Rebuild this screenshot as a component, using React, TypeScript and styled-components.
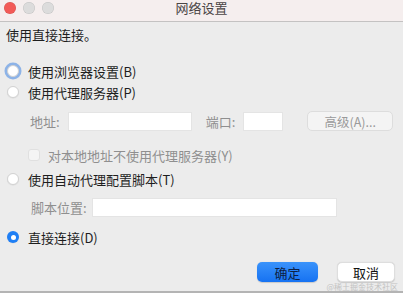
import React from "react";
import styled, { createGlobalStyle } from "styled-components";

const GlobalStyle = createGlobalStyle`
  html, body {
    margin: 0;
    padding: 0;
    background: #ececec;
    font-family: "Noto Sans CJK SC", "Liberation Sans", sans-serif;
  }
`;

const Window = styled.div`
  width: 403px;
  height: 293px;
  background: #ececec;
  display: flex;
  flex-direction: column;
  box-sizing: border-box;
  border-bottom: 2px solid #b4b4b4;
  position: relative;
  overflow: hidden;
`;

const TitleBar = styled.div`
  height: 21px;
  flex-shrink: 0;
  background: #f5eeee;
  border-bottom: 1px solid #c4c2c2;
  display: flex;
  align-items: center;
  position: relative;
`;

const Lights = styled.div`
  display: flex;
  gap: 7px;
  padding-left: 4px;
  margin-top: -6px;
`;

const Light = styled.span<{ color: string }>`
  width: 12px;
  height: 12px;
  border-radius: 50%;
  background: ${(p) => p.color};
  box-shadow: inset 0 0 0 0.5px rgba(0, 0, 0, 0.12);
`;

const Title = styled.div`
  position: absolute;
  left: 0;
  right: 0;
  top: 0;
  line-height: 15px;
  text-align: center;
  font-size: 13px;
  color: #4a4545;
`;

const Body = styled.div`
  display: flex;
  flex-direction: column;
  padding-left: 6px;
`;

const Row = styled.div<{ top: number; indent?: number }>`
  height: 20px;
  margin-top: ${(p) => p.top}px;
  padding-left: ${(p) => p.indent || 0}px;
  display: flex;
  align-items: center;
  font-size: 13px;
  color: #1e1e1e;
  white-space: nowrap;
`;

const Radio = styled.span<{ checked?: boolean; focus?: boolean }>`
  width: 12px;
  height: 12px;
  border-radius: 50%;
  box-sizing: border-box;
  margin-right: 9px;
  flex-shrink: 0;
  position: relative;
  background: ${(p) => (p.checked ? "#1f7ff5" : "#ffffff")};
  border: ${(p) => (p.checked ? "none" : "1px solid #d2d2d2")};
  box-shadow: ${(p) =>
    p.focus ? "0 0 0 2.5px rgba(110, 160, 230, 0.75)" : "0 0.5px 1px rgba(0,0,0,0.08)"};
  &::after {
    content: "";
    display: ${(p) => (p.checked ? "block" : "none")};
    position: absolute;
    left: 3.5px;
    top: 3.5px;
    width: 5px;
    height: 5px;
    border-radius: 50%;
    background: #fff;
  }
`;

const Check = styled.span`
  width: 12px;
  height: 12px;
  border-radius: 3px;
  box-sizing: border-box;
  border: 1px solid #e0e0e0;
  background: #f4f4f4;
  margin-right: 8px;
  flex-shrink: 0;
`;

const Muted = styled.span<{ gap?: number; lead?: number }>`
  color: #8f8f8f;
  margin-left: ${(p) => p.lead || 0}px;
  margin-right: ${(p) => p.gap || 0}px;
`;

const Input = styled.span<{ w: number }>`
  width: ${(p) => p.w}px;
  height: 19px;
  background: #ffffff;
  border: 1px solid #e4e4e4;
  box-sizing: border-box;
  flex-shrink: 0;
`;

const GhostButton = styled.span`
  width: 86px;
  height: 20px;
  margin-left: 24px;
  border-radius: 5px;
  background: #f4f4f4;
  border: 1px solid #dddddd;
  box-sizing: border-box;
  display: flex;
  align-items: center;
  justify-content: center;
  font-size: 12.5px;
  color: #9a9a9a;
`;

const Footer = styled.div`
  display: flex;
  justify-content: flex-end;
  gap: 19px;
  padding-right: 8px;
  margin-top: 15px;
`;

const Button = styled.span<{ primary?: boolean }>`
  width: ${(p) => (p.primary ? 61 : 58)}px;
  height: 20px;
  border-radius: 5px;
  box-sizing: border-box;
  display: flex;
  align-items: center;
  justify-content: center;
  font-size: 13px;
  color: ${(p) => (p.primary ? "#0d1f44" : "#111")};
  background: ${(p) =>
    p.primary ? "linear-gradient(#3a93fb, #1672f2)" : "#ffffff"};
  border: ${(p) => (p.primary ? "none" : "1px solid #dedede")};
  box-shadow: 0 0.5px 1px rgba(0, 0, 0, 0.15);
`;

const Watermark = styled.div`
  position: absolute;
  right: 5px;
  bottom: 0;
  font-size: 8px;
  line-height: 9px;
  color: #c2c2c2;
`;

export default function App() {
  return (
    <>
      <GlobalStyle />
      <Window>
        <TitleBar>
          <Lights>
            <Light color="#f25a57" />
            <Light color="#dcdcdc" />
            <Light color="#dcdcdc" />
          </Lights>
          <Title>网络设置</Title>
        </TitleBar>
        <Body>
          <Row top={2}>使用直接连接。</Row>
          <Row top={17} indent={1}>
            <Radio focus />
            使用浏览器设置(B)
          </Row>
          <Row top={1} indent={1}>
            <Radio />
            使用代理服务器(P)
          </Row>
          <Row top={9} indent={24}>
            <Muted gap={8}>地址:</Muted>
            <Input w={124} />
            <Muted gap={8} lead={14}>端口:</Muted>
            <Input w={40} />
            <GhostButton>高级(A)...</GhostButton>
          </Row>
          <Row top={14} indent={22}>
            <Check />
            <Muted>对本地地址不使用代理服务器(Y)</Muted>
          </Row>
          <Row top={4} indent={1}>
            <Radio />
            使用自动代理配置脚本(T)
          </Row>
          <Row top={8} indent={25}>
            <Muted gap={5}>脚本位置:</Muted>
            <Input w={245} />
          </Row>
          <Row top={10} indent={1}>
            <Radio checked />
            直接连接(D)
          </Row>
        </Body>
        <Footer>
          <Button primary>确定</Button>
          <Button>取消</Button>
        </Footer>
        <Watermark>@稀土掘金技术社区</Watermark>
      </Window>
    </>
  );
}
